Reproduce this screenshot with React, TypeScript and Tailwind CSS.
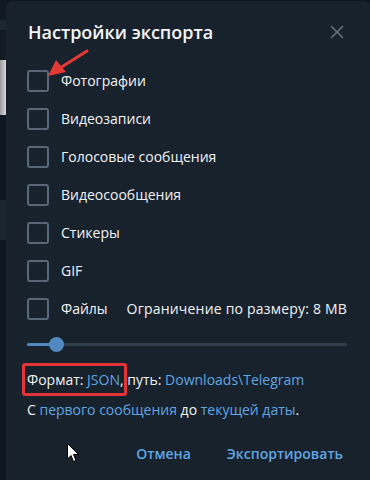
import { X } from 'lucide-react';

const items = ['Фотографии', 'Видеозаписи', 'Голосовые сообщения', 'Видеосообщения', 'Стикеры', 'GIF'];

function Box() {
  return <div className="w-[22px] h-[22px] shrink-0 rounded-[3px] border-2 border-[#56687a]" />;
}

export default function App() {
  return (
    <div
      className="relative flex w-[370px] h-[480px] overflow-hidden bg-[#0e1621] text-[#f2f4f6]"
      style={{ fontFamily: '"Open Sans", "Noto Sans", sans-serif' }}
    >
      {/* strip of the window behind */}
      <div className="flex w-[6px] shrink-0 flex-col">
        <div className="h-[20px] bg-[#111a24]" />
        <div className="h-[10px] bg-[#1c2733]" />
        <div className="h-[30px] bg-[#121a24]" />
        <div className="h-[55px] bg-gradient-to-r from-[#9a9a9a] to-[#d8d8d8]" />
        <div className="h-[85px] bg-[#0f1822]" />
        <div className="h-[40px] bg-[#1a2530]" />
        <div className="flex-1 bg-[#0f1822]" />
      </div>

      <div className="relative mt-[1px] flex flex-1 flex-col rounded-t-[6px] bg-[#18222d] pl-[21px] pr-[23px]">
        <div className="flex items-center justify-between pt-[19px]">
          <h1 className="pl-[1px] text-[18px] leading-[24px] font-semibold text-[#f5f7f9]">Настройки экспорта</h1>
          <X size={22} strokeWidth={1.5} className="-mr-[1px] text-[#6b7886]" />
        </div>

        <div className="mt-[26px] flex flex-col gap-[16px]">
          {items.map((t) => (
            <div key={t} className="flex h-[22px] items-center gap-[12px]">
              <Box />
              <span className="text-[14px] leading-[20px]">{t}</span>
            </div>
          ))}
          <div className="flex h-[22px] items-center gap-[12px]">
            <Box />
            <span className="text-[14px] leading-[20px]">Файлы</span>
            <span className="ml-auto text-[14px] leading-[20px] tracking-[0.2px]">Ограничение по размеру: 8 MB</span>
          </div>
        </div>

        <div className="relative mt-[16px] h-[16px]">
          <div className="absolute left-0 right-0 top-[7px] h-[3px] rounded-full bg-[#2f3d4c]" />
          <div className="absolute left-0 top-[7px] h-[3px] w-[29px] rounded-full bg-[#5288c1]" />
          <div className="absolute left-[22px] top-[1px] h-[15px] w-[15px] rounded-full bg-[#5288c1]" />
        </div>

        <p className="mt-[18px] text-[14px] leading-[20px]">
          <span className="relative">
            Формат: <span className="text-[#5fa7e3]">JSON</span>,
            <span className="absolute -left-[5px] -right-[3px] -top-[7px] -bottom-[7px] rounded-[3px] border-[3px] border-[#e5333a]" />
          </span>{' '}
          путь: <span className="text-[#5fa7e3]">Downloads\Telegram</span>
        </p>
        <p className="mt-[10px] text-[14px] leading-[20px]">
          С <span className="text-[#5fa7e3]">первого сообщения</span> до{' '}
          <span className="text-[#5fa7e3]">текущей даты</span>.
        </p>

        <div className="mt-auto mb-[16px] flex justify-end gap-[36px] pr-[4px]">
          <span className="text-[14px] leading-[20px] font-semibold text-[#5fa7e3]">Отмена</span>
          <span className="text-[14px] leading-[20px] font-semibold text-[#5fa7e3]">Экспортировать</span>
        </div>
      </div>

      {/* annotation arrow */}
      <svg className="absolute left-0 top-0" width="370" height="480" viewBox="0 0 370 480" fill="none">
        <line x1="87" y1="51" x2="60" y2="68" stroke="#e53935" strokeWidth="3" strokeLinecap="round" />
        <path d="M48 76 L56 60 L66 72 Z" fill="#e53935" />
        {/* mouse cursor */}
        <path
          d="M67.5 443.5 L67.5 459 L71 455.5 L73.5 461.5 L76 460.5 L73.5 454.5 L78.5 454.5 Z"
          fill="#ffffff"
          stroke="#000000"
          strokeWidth="1"
          strokeLinejoin="round"
        />
      </svg>
    </div>
  );
}
